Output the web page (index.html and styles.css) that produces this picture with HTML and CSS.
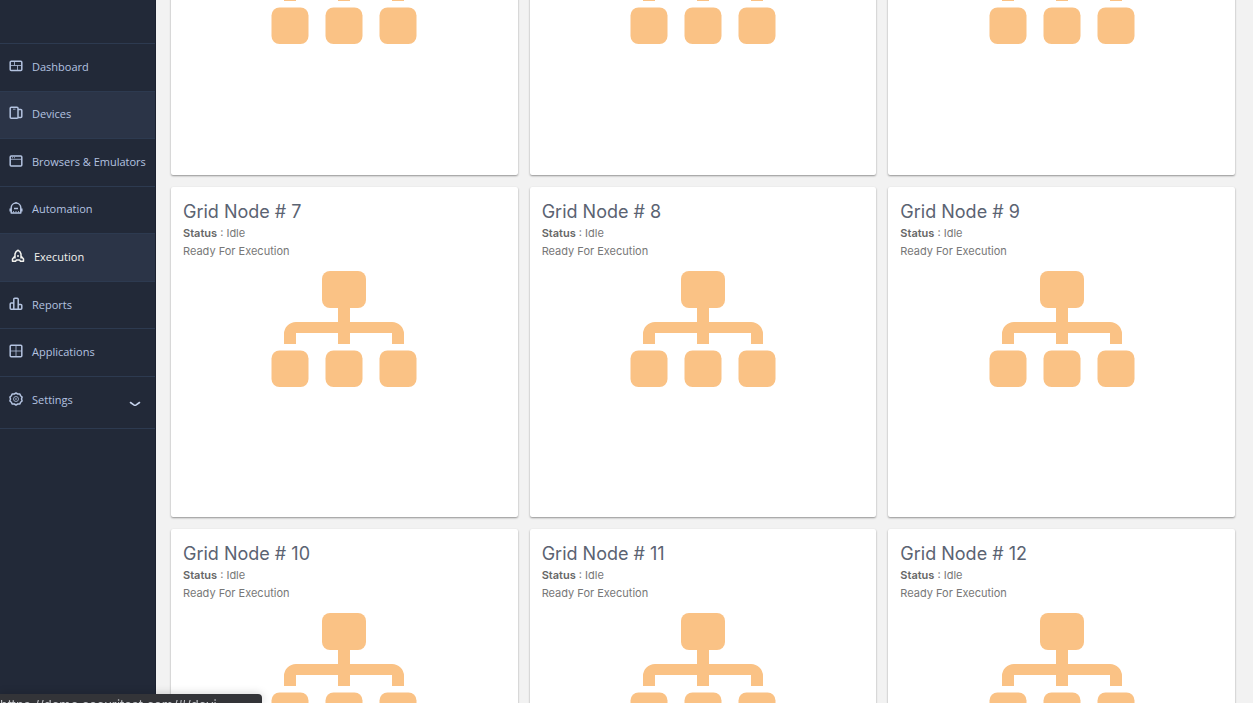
FILE: index.html
```html
<!DOCTYPE html>
<html lang="en">
<head>
<meta charset="utf-8">
<title>Execution</title>
<link rel="stylesheet" href="styles.css">
</head>
<body>
<svg class="defs" aria-hidden="true">
  <symbol id="tree" viewBox="0 0 146 116">
    <rect x="51" y="0" width="44" height="37" rx="8"/>
    <path d="M67 36h12v15h42a12 12 0 0 1 12 12v10h-12V62H79v11H67V62H25v11H13V63a12 12 0 0 1 12-12h42z"/>
    <rect x="0.500" y="79.500" width="37" height="36.500" rx="8"/>
    <rect x="54.500" y="79.500" width="37" height="36.500" rx="8"/>
    <rect x="108.500" y="79.500" width="37" height="36.500" rx="8"/>
  </symbol>
</svg>
<div class="app">
  <nav class="sidebar">
    <ul class="menu">
      <li><a class="item" href="#"><svg class="icon" viewBox="0 0 14 14"><rect x="1.200" y="2.200" width="11.600" height="9.400" rx="1"/><path class="thin" d="M1 6.500h12M5.500 2v4.500M8.500 6.500v5"/></svg>Dashboard</a></li>
      <li><a class="item lit" href="#"><svg class="icon" viewBox="0 0 14 14"><rect x="1.200" y="1.200" width="7.800" height="11" rx="1"/><path d="M9 3.500h2.800a1 1 0 0 1 1 1v6a1 1 0 0 1-1 1H9"/><path class="thin" d="M4 3.200h2.500"/></svg>Devices</a></li>
      <li><a class="item" href="#"><svg class="icon" viewBox="0 0 14 14"><rect x="1.200" y="2" width="11.600" height="10" rx="1"/><path class="thin" d="M1 5.300h12M3 3.700h1M5 3.700h1"/></svg>Browsers &amp; Emulators</a></li>
      <li><a class="item" href="#"><svg class="icon" viewBox="0 0 14 14"><path d="M2.200 12V6.800a4.800 4.800 0 0 1 9.600 0V12zM7 1v1M1.200 7.500v3M12.800 7.500v3M5 7.500h4"/><path class="thin" d="M4.500 10v1.500M7 10v1.500M9.500 10v1.500"/></svg>Automation</a></li>
      <li><a class="item lit active" href="#"><svg class="icon" viewBox="0 0 14 14"><path d="M4 7V5Q4.500 2.200 7 1.200Q9.500 2.200 10 5V7L12.500 10V12.300H9.500L8.500 11H5.500L4.500 12.300H1.500V10L4 7V9.500M10 7V9.500"/><circle class="dot" cx="7" cy="7" r="1"/></svg>Execution</a></li>
      <li><a class="item" href="#"><svg class="icon" viewBox="0 0 14 14"><path d="M4.800 12.200V2.200a.9.900 0 0 1 .9-.9h2.600a.9.900 0 0 1 .9.900v10M4.800 6H2.200a1 1 0 0 0-1 1v4.200a1 1 0 0 0 1 1h9.600a1 1 0 0 0 1-1V8.500a1 1 0 0 0-1-1H9.200"/></svg>Reports</a></li>
      <li><a class="item" href="#"><svg class="icon" viewBox="0 0 14 14"><rect x="1.200" y="1.200" width="11.600" height="11.600" rx="1"/><path class="thin" d="M7 1v12M1 7h12"/></svg>Applications</a></li>
      <li><a class="item settings" href="#"><svg class="icon" viewBox="0 0 14 14"><path d="M7 1l1.700 1 2-.1.900 1.800 1.500 1.300-.6 2 .6 2-1.500 1.300-.9 1.800-2-.1L7 13l-1.700-1-2 .1-.9-1.800L.9 9l.6-2-.6-2 1.500-1.300.9-1.800 2 .1z"/><circle class="thin" cx="7" cy="7" r="2.500"/><circle class="dot" cx="7" cy="7" r=".8"/></svg>Settings<svg class="chevron" viewBox="0 0 12 6"><path d="M1.500 1.500L4.800 3.900Q6 4.700 7.200 3.900L10.500 1.500"/></svg></a></li>
    </ul>
  </nav>
  <main class="content">
    <div class="grid">
      <section class="card partial"><svg class="tree"><use href="#tree"/></svg></section>
      <section class="card partial"><svg class="tree"><use href="#tree"/></svg></section>
      <section class="card partial"><svg class="tree"><use href="#tree"/></svg></section>
      <section class="card"><h2>Grid Node # 7</h2><p><b>Status</b> : Idle</p><p>Ready For Execution</p><svg class="tree"><use href="#tree"/></svg></section>
      <section class="card"><h2>Grid Node # 8</h2><p><b>Status</b> : Idle</p><p>Ready For Execution</p><svg class="tree"><use href="#tree"/></svg></section>
      <section class="card"><h2>Grid Node # 9</h2><p><b>Status</b> : Idle</p><p>Ready For Execution</p><svg class="tree"><use href="#tree"/></svg></section>
      <section class="card"><h2>Grid Node # 10</h2><p><b>Status</b> : Idle</p><p>Ready For Execution</p><svg class="tree"><use href="#tree"/></svg></section>
      <section class="card"><h2>Grid Node # 11</h2><p><b>Status</b> : Idle</p><p>Ready For Execution</p><svg class="tree"><use href="#tree"/></svg></section>
      <section class="card"><h2>Grid Node # 12</h2><p><b>Status</b> : Idle</p><p>Ready For Execution</p><svg class="tree"><use href="#tree"/></svg></section>
    </div>
  </main>
</div>
<div class="link-status">https://demo.securitest.com/#/devi</div>
</body>
</html>
```
FILE: styles.css
```css
* { box-sizing: border-box; }
body { margin: 0; font-family: Inter, sans-serif; background: #f2f2f2; }
.defs { display: none; }
.app { display: flex; height: 100vh; overflow: hidden; }

.sidebar { flex: none; width: 156px; padding-top: 43px; background: #222938; border-right: 1px solid #1b2130; }
.menu { display: grid; grid-template-rows: repeat(7, 1fr) 53px; height: 386px; margin: 0; padding: 0; list-style: none; }
.menu li { display: flex; border-top: 1px solid #2d3a50; }
.menu li:last-child { border-bottom: 1px solid #2d3a50; }
.item { display: flex; flex: 1; align-items: center; gap: 9px; padding: 0 0 2px 9px; color: #b4c3e0; font: 11px "Open Sans", sans-serif; text-decoration: none; white-space: nowrap; }
.lit { background: #2b3447; }
.active { padding-left: 11px; color: #f2f2ee; }
.settings { padding-bottom: 6px; }
.icon { flex: none; width: 14px; height: 14px; margin-bottom: 1px; fill: none; stroke: currentColor; stroke-width: 1.5; stroke-linejoin: round; }
.thin { stroke-width: 0.8; }
.dot { fill: currentColor; stroke: none; }
.chevron { width: 12px; height: 6px; margin: 8px 14px 0 auto; fill: none; stroke: #c5d2ec; stroke-width: 1.6; stroke-linecap: round; }

.content { flex: 1; padding: 0 18px 0 15px; }
.grid { display: grid; grid-template-columns: repeat(3, 1fr); grid-auto-rows: 330px; gap: 12px; margin-top: -155px; }
.card { padding: 12px; background: #fff; border-radius: 2px; box-shadow: 0 1px 2px rgba(0, 0, 0, 0.4); color: #777; }
.card h2 { margin: 0; color: #5b6372; font-size: 18px; font-weight: 400; line-height: 25px; }
.card p { margin: 0; font-size: 11px; line-height: 18px; }
.card b { font-weight: 600; color: #666; }
.tree { display: block; width: 146px; height: 116px; margin: 11px auto 0; fill: #fac285; }
.partial { padding-top: 72px; }

.link-status { position: fixed; left: 0; bottom: 0; width: 262px; height: 9px; padding-top: 2px; overflow: hidden; background: #333438; border-top-right-radius: 4px; box-shadow: 0 0 10px rgba(0, 0, 0, 0.2); color: #c4c6ca; font-size: 13px; line-height: 18px; white-space: nowrap; }
```
